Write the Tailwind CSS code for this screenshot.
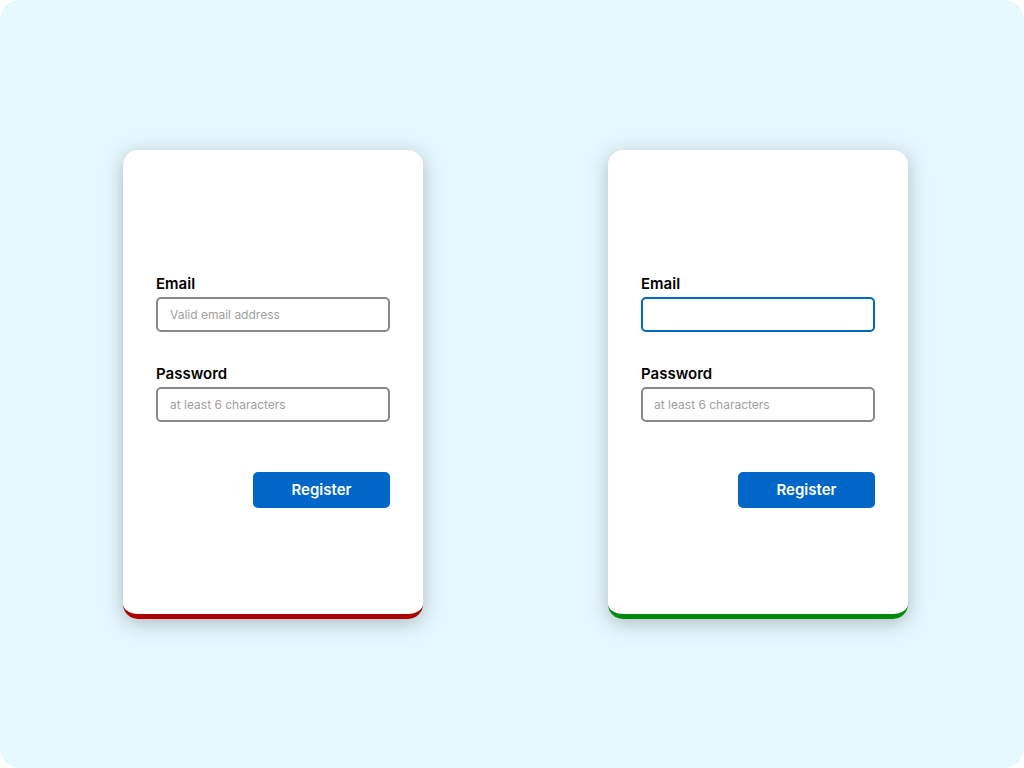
<!DOCTYPE html>
<html lang="en">
<head>
  <meta charset="UTF-8">
  <meta name="viewport" content="width=device-width, initial-scale=1.0">
  <title>Register</title>
  <script src="https://cdn.jsdelivr.net/npm/@tailwindcss/browser@4"></script>
</head>
<body class="bg-white font-['Inter',sans-serif] text-black">
  <main class="min-h-screen rounded-[20px] bg-[#e6f8ff] pt-[150px] pb-12 pl-[7px] flex flex-wrap justify-center items-start gap-[185px]">

    <!-- Error state -->
    <form class="w-[300px] rounded-[15px] border-b-5 border-[#ad0000] bg-white px-[33px] pt-[124px] pb-[106px] flex flex-col shadow-[0_4px_20px_rgba(0,0,0,0.25)]">
      <label for="email-error" class="mb-[3px] text-[15px] leading-5 font-semibold">Email</label>
      <input type="email" id="email-error" placeholder="Valid email address"
        class="mb-8 h-[35px] w-full rounded-[5px] border-2 border-[#888888] px-3 text-xs placeholder:text-[#a0a0a0] focus:outline-none focus:border-[#0066c8]">

      <label for="password-error" class="mb-[3px] text-[15px] leading-5 font-semibold">Password</label>
      <input type="password" id="password-error" placeholder="at least 6 characters"
        class="mb-[50px] h-[35px] w-full rounded-[5px] border-2 border-[#888888] px-3 text-xs placeholder:text-[#a0a0a0] focus:outline-none focus:border-[#0066c8]">

      <button type="submit" class="h-9 w-[137px] self-end rounded-[5px] bg-[#0066c8] text-[15px] leading-5 font-semibold text-white">Register</button>
    </form>

    <!-- Success state -->
    <form class="w-[300px] rounded-[15px] border-b-5 border-[#008a09] bg-white px-[33px] pt-[124px] pb-[106px] flex flex-col shadow-[0_4px_20px_rgba(0,0,0,0.25)]">
      <label for="email-success" class="mb-[3px] text-[15px] leading-5 font-semibold">Email</label>
      <input type="email" id="email-success"
        class="mb-8 h-[35px] w-full rounded-[5px] border-2 border-[#0066c8] px-3 text-xs focus:outline-none">

      <label for="password-success" class="mb-[3px] text-[15px] leading-5 font-semibold">Password</label>
      <input type="password" id="password-success" placeholder="at least 6 characters"
        class="mb-[50px] h-[35px] w-full rounded-[5px] border-2 border-[#888888] px-[11px] text-xs placeholder:text-[#a0a0a0] focus:outline-none focus:border-[#0066c8]">

      <button type="submit" class="h-9 w-[137px] self-end rounded-[5px] bg-[#0066c8] text-[15px] leading-5 font-semibold text-white">Register</button>
    </form>

  </main>
</body>
</html>
